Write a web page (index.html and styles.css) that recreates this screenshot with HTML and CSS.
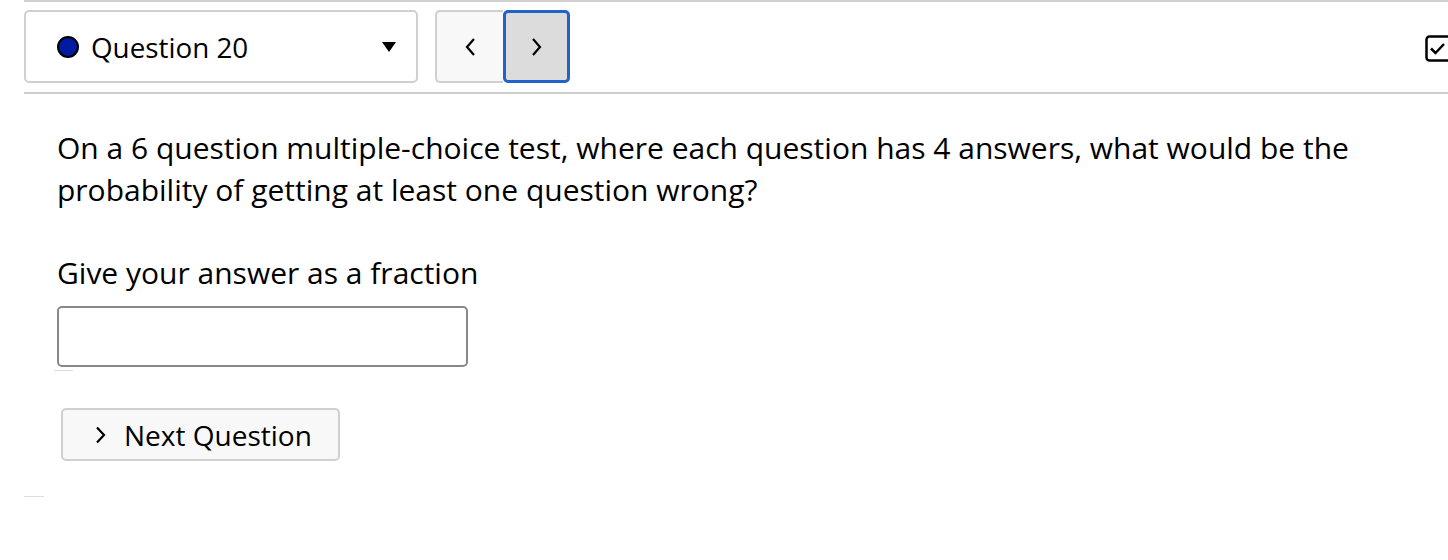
FILE: index.html
```html
<!DOCTYPE html>
<html>
<head>
<meta charset="utf-8">
<link rel="stylesheet" href="styles.css">
</head>
<body>
<div class="header">
  <div class="select">
    <span class="dot"></span>
    <span class="qlabel">Question 20</span>
    <span class="caret"></span>
  </div>
  <div class="nav">
    <button class="navbtn prev"><svg width="14" height="22" viewBox="0 0 14 22"><path d="M11 3 L4 11 L11 19" fill="none" stroke="#000" stroke-width="2.2"/></svg></button>
    <button class="navbtn next"><svg width="14" height="22" viewBox="0 0 14 22"><path d="M3 3 L10 11 L3 19" fill="none" stroke="#000" stroke-width="2.2"/></svg></button>
  </div>
  <div class="spacer"></div>
  <svg class="check" width="26" height="28" viewBox="0 0 26 28"><rect x="1.5" y="1.5" width="24" height="24" rx="3" fill="none" stroke="#000" stroke-width="2.5"/><path d="M6 13.5 L10.5 18 L19 9" fill="none" stroke="#000" stroke-width="2.5"/></svg>
</div>
<div class="content">
  <p class="question">On a 6 question multiple-choice test, where each question has 4 answers, what would be the probability of getting at least one question wrong?</p>
  <p class="prompt">Give your answer as a fraction</p>
  <input class="answer" type="text">
  <div class="tick1"></div>
  <button class="nextq"><svg width="14" height="20" viewBox="0 0 14 20"><path d="M3 2.5 L10 10 L3 17.5" fill="none" stroke="#000" stroke-width="2.2"/></svg><span>Next Question</span></button>
</div>
<div class="tick2"></div>
</body>
</html>
```
FILE: styles.css
```css
html, body { margin: 0; padding: 0; background: #fff; }
body { font-family: "Open Sans", "DejaVu Sans", sans-serif; color: #000; width: 1448px; height: 560px; overflow: hidden; }
.header {
  margin-left: 24px;
  border-top: 2px solid #cfcfcf;
  border-bottom: 2px solid #cfcfcf;
  height: 90px;
  box-sizing: content-box;
  display: flex;
  align-items: flex-start;
}
.select {
  margin-top: 8px;
  width: 394px;
  height: 73px;
  box-sizing: border-box;
  border: 2px solid #d0d0d0;
  border-radius: 5px;
  display: flex;
  align-items: center;
  padding-left: 31px;
  padding-right: 20px;
}
.dot { width: 22px; height: 22px; border-radius: 50%; background: #001aa0; border: 2px solid #000; box-sizing: border-box; flex: none; }
.qlabel { font-size: 27.8px; margin-left: 12px; flex: 1; }
.caret { width: 0; height: 0; border-left: 7px solid transparent; border-right: 7px solid transparent; border-top: 10px solid #000; }
.nav { display: flex; margin-left: 17px; margin-top: 8px; }
.navbtn { height: 73px; box-sizing: border-box; display: flex; align-items: center; justify-content: center; padding: 0; cursor: pointer; }
.prev { width: 68px; background: #f8f8f8; border: 2px solid #d0d0d0; border-right: none; border-radius: 5px 0 0 5px; }
.next { width: 67px; background: #dcdcdc; border: 3px solid #2163c9; border-radius: 5px; }
.spacer { flex: 1; }
.check { margin-top: 33px; margin-right: -3px; }
.content { padding-left: 57px; }
.question { font-size: 30px; line-height: 42px; margin: 33px 0 0 0; width: 1340px; }
.prompt { font-size: 30px; line-height: 42px; margin: 41px 0 0 0; }
.answer { display: block; width: 411px; height: 61px; box-sizing: border-box; border: 2px solid #888; border-radius: 5px; margin-top: 12px; font-size: 24px; font-family: inherit; }
.tick1 { width: 19px; height: 1px; background: #ddd; margin-left: -3px; margin-top: 3px; }
.nextq { margin-top: 37px; margin-left: 4px; width: 279px; height: 53px; box-sizing: border-box; background: #f8f8f8; border: 2px solid #d0d0d0; border-radius: 5px; display: flex; align-items: center; padding-left: 31px; font-family: inherit; font-size: 28px; color: #000; }
.nextq span { margin-left: 16px; }
.tick2 { width: 20px; height: 1px; background: #ddd; margin-left: 24px; margin-top: 35px; }
```
